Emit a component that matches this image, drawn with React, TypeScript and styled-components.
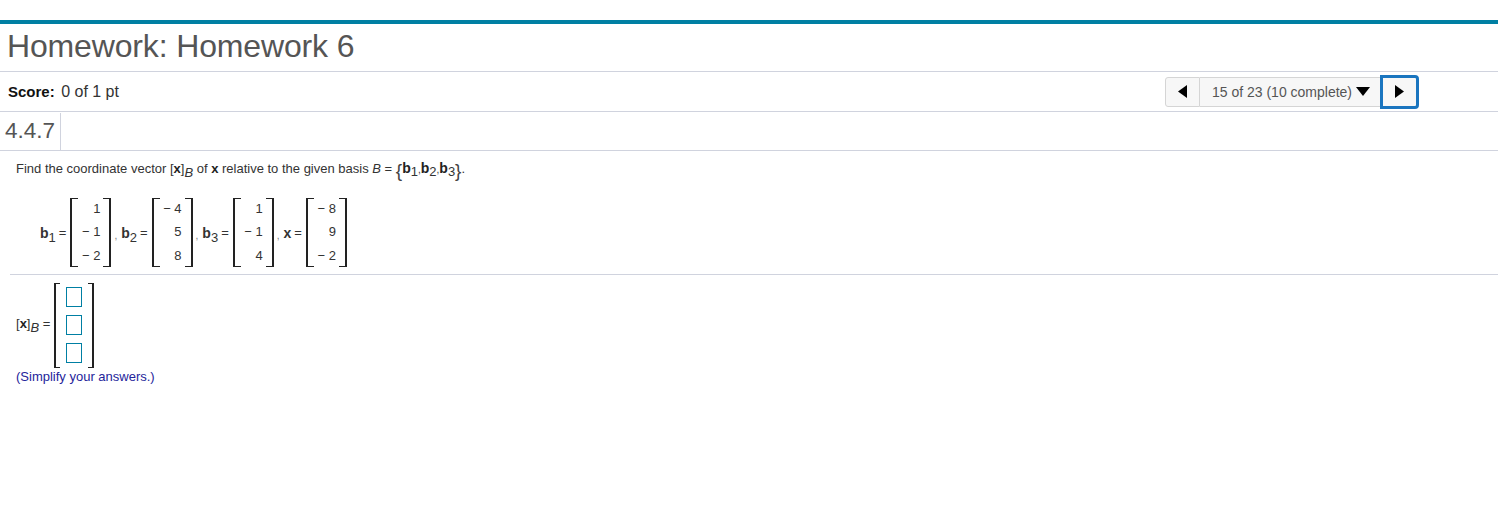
import React from "react";
import styled, { createGlobalStyle } from "styled-components";

const Global = createGlobalStyle`
  html, body { margin: 0; padding: 0; background: #fff; }
  body { font-family: "Liberation Sans", Arial, sans-serif; color: #333; }
`;
const Page = styled.div`
  padding-top: 20px;
  width: 1498px;
  height: 494px;
  overflow: hidden;
`;
const Title = styled.h1`
  margin: 0;
  box-sizing: border-box;
  height: 52px;
  border-top: 4px solid #007fa3;
  border-bottom: 1px solid #d0d3de;
  padding: 4px 0 0 7px;
  font-size: 32px;
  line-height: 37px;
  letter-spacing: -0.15px;
  font-weight: 400;
  color: #555;
`;
const ScoreRow = styled.div`
  box-sizing: border-box;
  height: 40px;
  border-bottom: 1px solid #d0d3de;
  display: flex;
  align-items: center;
  justify-content: space-between;
  padding: 0 79px 0 8px;
`;
const Score = styled.div`
  font-size: 16px;
  color: #333;
  b { color: #111; font-size: 15px; margin-right: 2px; }
`;
const Nav = styled.div`
  display: flex;
  align-items: center;
`;
const NavCell = styled.div<{ $w: number }>`
  box-sizing: border-box;
  width: ${(p) => p.$w}px;
  height: 30px;
  background: #f7f7f7;
  border: 1px solid #d5d5d5;
  display: flex;
  align-items: center;
  justify-content: center;
  font-size: 14px;
  color: #555;
  gap: 4px;
`;
const PrevCell = styled(NavCell)`
  border-radius: 3px 0 0 3px;
  border-right: 1px solid #d5d5d5;
`;
const MidCell = styled(NavCell)`
  border-left: none;
  border-right: none;
  padding-left: 2px;
`;
const NextCell = styled.div`
  box-sizing: border-box;
  width: 39px;
  height: 34px;
  background: #f7f7f7;
  border: 3px solid #1a75bf;
  border-radius: 0 4px 4px 0;
  display: flex;
  align-items: center;
  justify-content: center;
`;
const Section = styled.div`
  box-sizing: border-box;
  height: 39px;
  border-bottom: 1px solid #d0d3de;
  padding-top: 1px;
`;
const Number = styled.div`
  box-sizing: border-box;
  width: 61px;
  height: 37px;
  border-right: 1px solid #d0d3de;
  padding-left: 5px;
  font-size: 22.5px;
  line-height: 35px;
  color: #555;
`;
const Question = styled.div`
  box-sizing: border-box;
  font-size: 13px;
  line-height: 15px;
  color: #333;
  padding: 10px 0 0 16px;
  height: 30px;
  white-space: pre;
`;
const Sub = styled.sub`
  font-size: 13px;
  line-height: 0;
  vertical-align: -4px;
`;
const Bold = styled.b`
  color: #222;
`;
const Brace = styled.span`
  font-size: 19px;
  line-height: 12px;
  vertical-align: -4px;
  font-weight: 400;
  color: #444;
`;
const BasisSub = styled(Sub)`
  font-weight: 400;
  vertical-align: -3px;
`;
const BasisLetter = styled.b`
  font-size: 14px;
  color: #222;
`;
const BasisComma = styled.span`
  font-size: 10px;
`;
const MatrixLine = styled.div`
  margin: 17px 0 0 10px;
  padding: 0 0 7px 30px;
  height: 69px;
  border-bottom: 1px solid #d0d3de;
  display: flex;
  align-items: center;
  font-size: 13px;
  box-sizing: content-box;
  white-space: pre;
`;
const Lhs = styled.span`
  font-size: 14px;
  margin-top: 1px;
`;
const Eq = styled.span`
  font-size: 13px;
  margin: 0 4px 0 3px;
`;
const Comma = styled.span`
  font-size: 10px;
  color: #777;
  margin: 6px 4px 0 3px;
`;
const Bracket = styled.div<{ $side: "l" | "r" }>`
  box-sizing: border-box;
  width: 8px;
  height: 69px;
  border: 1px solid #222;
  border-width: 1px 0;
  border-${(p) => (p.$side === "l" ? "left" : "right")}-width: 2px;
`;
const Col = styled.div<{ $w: number }>`
  width: ${(p) => p.$w}px;
  height: 69px;
  display: flex;
  flex-direction: column;
  justify-content: center;
  align-items: flex-end;
  padding: 0 3px 1px 0;
  box-sizing: border-box;
  font-size: 13px;
  line-height: 23.5px;
  color: #333;
`;
const Answer = styled.div`
  display: flex;
  align-items: center;
  margin: 8px 0 0 16px;
  font-size: 13px;
  white-space: pre;
`;
const AnswerLabel = styled.span`
  width: 38px;
  padding-bottom: 4px;
`;
const AnswerBracket = styled(Bracket)`
  height: 85px;
  width: 6px;
`;
const InputCol = styled.div`
  width: 28px;
  height: 85px;
  display: flex;
  flex-direction: column;
  align-items: center;
  gap: 8px;
  padding: 4px 0 5px;
  box-sizing: border-box;
`;
const Box = styled.div`
  box-sizing: border-box;
  width: 16px;
  height: 20px;
  border: 1px solid #007fa3;
  background: #fff;
`;
const Hint = styled.div`
  margin: 1px 0 0 16px;
  font-size: 13px;
  line-height: 15px;
  color: #24249a;
`;

const Tri = ({ dir, w, h }: { dir: "l" | "r" | "d"; w: number; h: number }) => {
  const pts = dir === "l" ? `${w},0 ${w},${h} 0,${h / 2}` : dir === "r" ? `0,0 0,${h} ${w},${h / 2}` : `0,0 ${w},0 ${w / 2},${h}`;
  return (
    <svg width={w} height={h} viewBox={`0 0 ${w} ${h}`}>
      <polygon points={pts} fill="#000" />
    </svg>
  );
};

const Matrix = ({ vals }: { vals: string[] }) => (
  <>
    <Bracket $side="l" />
    <Col $w={25}>
      {vals.map((v, i) => (
        <span key={i}>{v}</span>
      ))}
    </Col>
    <Bracket $side="r" />
  </>
);

export default function App() {
  return (
    <Page>
      <Global />
      <Title>Homework: Homework 6</Title>
      <ScoreRow>
        <Score>
          <b>Score:</b> 0 of 1 pt
        </Score>
        <Nav>
          <PrevCell $w={35}>
            <Tri dir="l" w={9} h={13} />
          </PrevCell>
          <MidCell $w={180}>
            15 of 23 (10 complete)
            <Tri dir="d" w={14} h={9} />
          </MidCell>
          <NextCell>
            <Tri dir="r" w={9} h={13} />
          </NextCell>
        </Nav>
      </ScoreRow>
      <Section>
        <Number>4.4.7</Number>
      </Section>
      <Question>
        Find the coordinate vector [<Bold>x</Bold>]<Sub><i>B</i></Sub> of <Bold>x</Bold> relative to the given basis <i>B</i> = <Brace>{"{"}</Brace>
        <BasisLetter>b</BasisLetter><BasisSub>1</BasisSub><BasisComma>,</BasisComma><BasisLetter>b</BasisLetter><BasisSub>2</BasisSub><BasisComma>,</BasisComma><BasisLetter>b</BasisLetter><BasisSub>3</BasisSub>
        <Brace>{"}"}</Brace>.
      </Question>
      <MatrixLine>
        <Lhs><b>b</b><Sub>1</Sub></Lhs><Eq>=</Eq>
        <Matrix vals={["1", "− 1", "− 2"]} />
        <Comma>,</Comma>
        <Lhs><b>b</b><Sub>2</Sub></Lhs><Eq>=</Eq>
        <Matrix vals={["− 4", "5", "8"]} />
        <Comma>,</Comma>
        <Lhs><b>b</b><Sub>3</Sub></Lhs><Eq>=</Eq>
        <Matrix vals={["1", "− 1", "4"]} />
        <Comma>,</Comma>
        <Lhs><b>x</b></Lhs><Eq>=</Eq>
        <Matrix vals={["− 8", "9", "− 2"]} />
      </MatrixLine>
      <Answer>
        <AnswerLabel>[<Bold>x</Bold>]<Sub><i>B</i></Sub> =</AnswerLabel>
        <AnswerBracket $side="l" />
        <InputCol>
          <Box />
          <Box />
          <Box />
        </InputCol>
        <AnswerBracket $side="r" />
      </Answer>
      <Hint>(Simplify your answers.)</Hint>
    </Page>
  );
}
